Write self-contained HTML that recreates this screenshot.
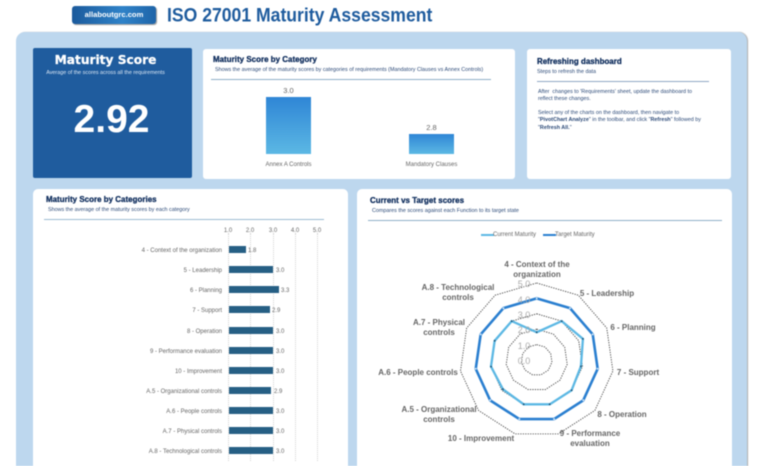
<!DOCTYPE html>
<html><head><meta charset="utf-8"><style>
html,body{margin:0;padding:0;background:#fff;}
#p{position:relative;width:768px;height:466px;overflow:hidden;background:#fff;font-family:"Liberation Sans",sans-serif;filter:blur(.4px);}
#p div{position:absolute;white-space:nowrap;}
.card{background:#fff;border-radius:3px;}
.h{font-weight:700;color:#12305f;font-size:7.9px;line-height:11px;-webkit-text-stroke:.3px #12305f;transform:scaleY(1.08);letter-spacing:.05px;}
.s{color:#2c4a78;font-size:5.4px;line-height:7px;}
.l{color:#666;font-size:6px;line-height:8px;text-align:right;width:180px;left:42px;margin-top:.5px;}
.v{color:#666;font-size:6px;line-height:8px;margin-top:.5px;}
.t{color:#666;font-size:6px;line-height:8px;width:20px;text-align:center;top:227px;}
.b{background:#265f84;height:7px;left:228.5px;margin-top:.4px;}
.g{top:233px;height:228px;width:0;border-left:1px dotted #d4d4d4;}
svg text{font-family:"Liberation Sans",sans-serif;font-size:8px;font-weight:700;fill:#666;text-anchor:middle;}
svg text.n{font-size:9px;font-weight:400;fill:#aaa;}
</style></head><body><div id="p">
<div style="left:72px;top:6px;width:84px;height:18px;border-radius:3px;background:linear-gradient(90deg,#1b5a9c,#2f82c8 60%,#1e64a8);box-shadow:1px 1px 1px #999;color:#fff;font-weight:700;font-size:7.6px;line-height:18px;text-align:center;">allaboutgrc.com</div>
<div style="left:167px;top:2px;color:#1f5c9e;font-weight:700;font-size:17.6px;line-height:26px;transform:scaleY(1.08);">ISO 27001 Maturity Assessment</div>

<div style="left:16px;top:32px;width:731px;height:450px;background:#bdd7ee;border-radius:9px;box-shadow:1px 0 1px #aaa;"></div>

<div style="left:33px;top:48px;width:159px;height:130px;background:#1f5c9e;border-radius:2px;"></div>
<div style="left:33px;top:52px;width:145px;text-align:center;color:#fff;font-family:'DejaVu Sans',sans-serif;font-weight:700;font-size:12.2px;line-height:16px;-webkit-text-stroke:.25px #fff;">Maturity Score</div>
<div style="left:33px;top:69px;width:145px;text-align:center;color:#dce8f5;font-size:5.4px;line-height:8px;">Average of the scores across all the requirements</div>
<div style="left:33px;top:95px;width:157px;text-align:center;color:#fff;font-weight:700;font-size:39px;line-height:50px;">2.92</div>

<div class="card" style="left:203px;top:49px;width:312px;height:130px;"></div>
<div class="h" style="left:213px;top:54px;">Maturity Score by Category</div>
<div class="s" style="left:215px;top:67px;">Shows the average of the maturity scores by categories of requirements (Mandatory Clauses vs Annex Controls)</div>
<div style="left:211px;top:79px;width:280px;height:1px;background:#8fb0c8;"></div>
<div style="left:266px;top:97px;width:45px;height:57px;background:linear-gradient(#2f86d6,#5cb8e4);"></div>
<div style="left:409px;top:134px;width:45px;height:20px;background:linear-gradient(#2f86d6,#5cb8e4);"></div>
<div class="v" style="left:266px;top:86.5px;width:45px;text-align:center;font-size:7.5px;">3.0</div>
<div class="v" style="left:409px;top:123.5px;width:45px;text-align:center;font-size:7.5px;">2.8</div>
<div class="v" style="left:248px;top:160.5px;width:81px;text-align:center;">Annex A Controls</div>
<div class="v" style="left:391px;top:160.5px;width:81px;text-align:center;">Mandatory Clauses</div>

<div class="card" style="left:527px;top:49px;width:204px;height:130px;"></div>
<div class="h" style="left:537px;top:56px;">Refreshing dashboard</div>
<div class="s" style="left:537px;top:69px;">Steps to refresh the data</div>
<div style="left:537px;top:81px;width:172px;height:1px;background:#8fa8c4;"></div>
<div class="s" style="left:538px;top:88px;line-height:7.2px;margin-top:.5px;">After &nbsp;changes to 'Requirements' sheet, update the dashboard to<br>reflect these changes.<br><br>Select any of the charts on the dashboard, then navigate to<br>"<b>PivotChart Analyze</b>" in the toolbar, and click "<b>Refresh</b>" followed by<br>"<b>Refresh All.</b>"</div>

<div class="card" style="left:33px;top:189px;width:315px;height:290px;border-radius:5px;"></div>
<div class="h" style="left:46px;top:194px;">Maturity Score by Categories</div>
<div class="s" style="left:48px;top:207px;">Shows the average of the maturity scores by each category</div>
<div style="left:44px;top:219px;width:280px;height:1px;background:#9dbdd2;"></div>
<div class="t" style="left:218px;">1.0</div><div class="t" style="left:240px;">2.0</div><div class="t" style="left:263px;">3.0</div><div class="t" style="left:285px;">4.0</div><div class="t" style="left:307px;">5.0</div>
<div class="g" style="left:228px;"></div><div class="g" style="left:250px;"></div><div class="g" style="left:273px;"></div><div class="g" style="left:295px;"></div><div class="g" style="left:317px;"></div>

<div class="l" style="top:246px;">4 - Context of the organization</div><div class="b" style="top:246px;width:17px;"></div><div class="v" style="left:248px;top:246px;">1.8</div>
<div class="l" style="top:266px;">5 - Leadership</div><div class="b" style="top:266px;width:44px;"></div><div class="v" style="left:276px;top:266px;">3.0</div>
<div class="l" style="top:286px;">6 - Planning</div><div class="b" style="top:286px;width:50px;"></div><div class="v" style="left:281px;top:286px;">3.3</div>
<div class="l" style="top:306px;">7 - Support</div><div class="b" style="top:306px;width:41px;"></div><div class="v" style="left:272px;top:306px;">2.9</div>
<div class="l" style="top:327px;">8 - Operation</div><div class="b" style="top:327px;width:44px;"></div><div class="v" style="left:276px;top:327px;">3.0</div>
<div class="l" style="top:347px;">9 - Performance evaluation</div><div class="b" style="top:347px;width:44px;"></div><div class="v" style="left:276px;top:347px;">3.0</div>
<div class="l" style="top:367px;">10 - Improvement</div><div class="b" style="top:367px;width:44px;"></div><div class="v" style="left:276px;top:367px;">3.0</div>
<div class="l" style="top:387px;">A.5 - Organizational controls</div><div class="b" style="top:387px;width:42px;"></div><div class="v" style="left:274px;top:387px;">2.9</div>
<div class="l" style="top:407px;">A.6 - People controls</div><div class="b" style="top:407px;width:44px;"></div><div class="v" style="left:276px;top:407px;">3.0</div>
<div class="l" style="top:427px;">A.7 - Physical controls</div><div class="b" style="top:427px;width:44px;"></div><div class="v" style="left:276px;top:427px;">3.0</div>
<div class="l" style="top:447px;">A.8 - Technological controls</div><div class="b" style="top:447px;width:44px;"></div><div class="v" style="left:276px;top:447px;">3.0</div>

<div class="card" style="left:357px;top:189px;width:375px;height:290px;border-radius:5px;"></div>
<div class="h" style="left:370px;top:195px;">Current vs Target scores</div>
<div class="s" style="left:372px;top:208px;">Compares the scores against each Function to its target state</div>
<div style="left:368px;top:220px;width:354px;height:1px;background:#8fb0c8;"></div>

<svg style="position:absolute;left:0;top:0;" width="768" height="466" viewBox="0 0 768 466">
<defs><polygon id="r" points="0,-1 .5406,-.8413 .9096,-.4154 .9898,.1423 .7557,.6549 .2817,.9595 -.2817,.9595 -.7557,.6549 -.9898,.1423 -.9096,-.4154 -.5406,-.8413"/></defs>
<line x1="481" y1="235" x2="494" y2="235" stroke="#5cb8e4" stroke-width="2"/>
<line x1="543" y1="235" x2="556" y2="235" stroke="#2a7fd0" stroke-width="2"/>
<g transform="translate(536.7,360)" fill="none" stroke="#333">
<use href="#r" transform="scale(15.4)" stroke-width=".055" stroke-dasharray=".08 .08"/>
<use href="#r" transform="scale(30.8)" stroke-width=".028" stroke-dasharray=".04 .04"/>
<use href="#r" transform="scale(46.2)" stroke-width=".019" stroke-dasharray=".026 .026"/>
<use href="#r" transform="scale(77)" stroke-width=".011" stroke-dasharray=".016 .016"/>
<g transform="scale(15.4)">
<polygon points="0,-1.8 1.622,-2.524 3.002,-1.371 2.870,.413 2.267,1.965 .845,2.879 -.845,2.879 -2.192,1.899 -2.969,.427 -2.729,-1.246 -1.622,-2.524" stroke="#5cb8e4" stroke-width=".15"/>
<use href="#r" transform="scale(4)" stroke="#2a7fd0" stroke-width=".042"/>
</g>
<g fill="#cfe6f7" stroke="none">
<circle cx="0" cy="-61.6" r="1"/><circle cx="33.3" cy="-51.8" r="1"/><circle cx="56" cy="-25.6" r="1"/><circle cx="61" cy="8.8" r="1"/><circle cx="46.6" cy="40.3" r="1"/><circle cx="17.4" cy="59.1" r="1"/><circle cx="-17.4" cy="59.1" r="1"/><circle cx="-46.6" cy="40.3" r="1"/><circle cx="-61" cy="8.8" r="1"/><circle cx="-56" cy="-25.6" r="1"/><circle cx="-33.3" cy="-51.8" r="1"/>
</g>
<g fill="#1e4f70" stroke="none">
<circle cx="0" cy="-27.7" r=".9"/><circle cx="25" cy="-38.9" r=".9"/><circle cx="46.2" cy="-21.1" r=".9"/><circle cx="44.2" cy="6.4" r=".9"/><circle cx="34.9" cy="30.3" r=".9"/><circle cx="13" cy="44.3" r=".9"/><circle cx="-13" cy="44.3" r=".9"/><circle cx="-33.8" cy="29.2" r=".9"/><circle cx="-45.7" cy="6.6" r=".9"/><circle cx="-42" cy="-19.2" r=".9"/><circle cx="-25" cy="-38.9" r=".9"/>
</g>
</g>
<g class="nums"><text class="n" x="524" y="287">5.0</text><text class="n" x="524" y="303">4.0</text><text class="n" x="524" y="318">3.0</text><text class="n" x="524" y="333">2.0</text><text class="n" x="524" y="349">1.0</text><text class="n" x="524" y="364">0.0</text></g>
<text x="537" y="267">4 - Context of the</text><text x="537" y="277">organization</text>
<text x="607" y="296">5 - Leadership</text>
<text x="633" y="330">6 - Planning</text>
<text x="638" y="375">7 - Support</text>
<text x="622" y="417">8 - Operation</text>
<text x="590" y="436">9 - Performance</text><text x="590" y="446">evaluation</text>
<text x="481" y="441">10 - Improvement</text>
<text x="439" y="412">A.5 - Organizational</text><text x="439" y="422">controls</text>
<text x="418" y="375">A.6 - People controls</text>
<text x="439" y="325">A.7 - Physical</text><text x="439" y="335">controls</text>
<text x="458" y="290">A.8 - Technological</text><text x="458" y="300">controls</text>
</svg>
<div class="v" style="left:493px;top:230.5px;">Current Maturity</div>
<div class="v" style="left:555px;top:230.5px;">Target Maturity</div>
</div></body></html>
